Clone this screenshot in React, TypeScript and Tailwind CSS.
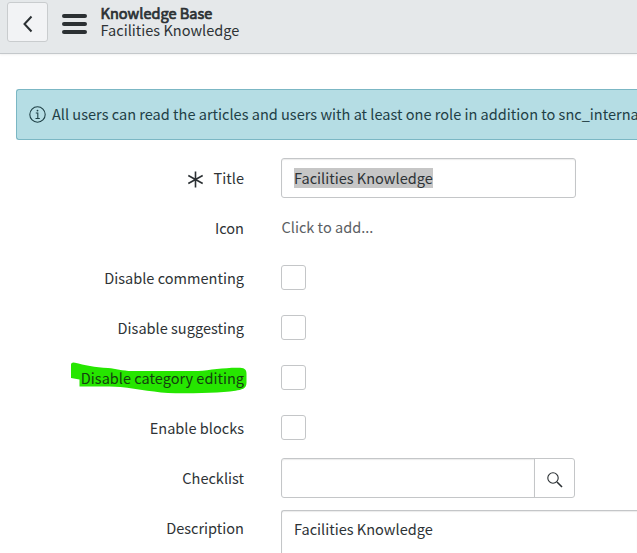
import type { ReactNode } from "react";

const checkboxes = [
  { id: "commenting", label: "Disable commenting" },
  { id: "suggesting", label: "Disable suggesting" },
  { id: "category", label: "Disable category editing", highlighted: true },
  { id: "blocks", label: "Enable blocks" },
];

function Header() {
  return (
    <header className="flex h-[54px] items-start border-b border-[#c4c8cb] bg-[#e5e8ea] shadow-[0_1px_2px_rgba(0,0,0,0.06)]">
      <button
        type="button"
        aria-label="Back"
        className="ml-[7px] mt-[2px] flex h-10 w-[41px] items-center justify-center rounded-[3px] border border-[#c9ccce] bg-[#f2f3f5]"
      >
        <svg width="12" height="18" viewBox="0 0 12 18" fill="none" stroke="#2b3033" strokeWidth="2" className="mt-[3px]">
          <path d="M9.500 1.500 2.500 9l7 7.500" />
        </svg>
      </button>
      <button type="button" aria-label="Menu" className="ml-[14px] mt-[14px] flex flex-col gap-1">
        <span className="h-1 w-[25px] rounded-full bg-[#2b3033]" />
        <span className="h-1 w-[25px] rounded-full bg-[#2b3033]" />
        <span className="h-1 w-[25px] rounded-full bg-[#2b3033]" />
      </button>
      <div className="ml-[13.6px] mt-1 leading-[17px]">
        <h1 className="[-webkit-text-stroke:0.7px_#2b3033]">Knowledge Base</h1>
        <p>Facilities Knowledge</p>
      </div>
    </header>
  );
}

function Notice() {
  return (
    <div className="ml-4 mt-[35px] flex h-[51px] items-center overflow-hidden rounded-l-[3px] border border-r-0 border-[#7bb7c4] bg-[#b5dde4] pl-3 text-[#1f4046]">
      <svg width="17" height="17" viewBox="0 0 17 17" fill="none" stroke="currentColor" className="shrink-0">
        <circle cx="8.5" cy="8.5" r="7.7" strokeWidth="1.1" />
        <path d="M6.8 7h2v5.5M6.5 12.5h4.3" strokeWidth="1.1" />
        <circle cx="8.5" cy="4.6" r="0.9" fill="currentColor" stroke="none" />
      </svg>
      <p className="mb-0.5 ml-1.5 whitespace-nowrap">
        All users can read the articles and users with at least one role in addition to snc_internal
      </p>
    </div>
  );
}

function Field({ label, htmlFor, children }: { label: ReactNode; htmlFor?: string; children: ReactNode }) {
  return (
    <div className="flex h-[50px] items-center">
      <label htmlFor={htmlFor} className="flex w-[244px] items-center justify-end whitespace-nowrap">
        {label}
      </label>
      <div className="ml-[37px] flex-1">{children}</div>
    </div>
  );
}

function Highlighted({ children }: { children: ReactNode }) {
  return (
    <span className="relative">
      <svg
        width="178"
        height="34"
        viewBox="0 0 178 34"
        fill="#26e600"
        className="absolute -left-[11px] -top-[5px]"
      >
        <path d="M1 2.500Q1 0 5 .700C14 3 25 5.500 38 6c8 .5 14 3 24 3h66c12-1 27-3.500 40-3.300 6 0 8.500 1 8.500 6v9c0 6-5 7-11 8-14 2.300-35 2.500-60 2.500-20-.2-37-4.500-55-6.200-12-.8-29-.5-41-.5v-7L1 16Z" />
      </svg>
      <span className="relative text-[#14400f]">{children}</span>
    </span>
  );
}

export default function App() {
  return (
    <div className="h-[553px] w-full overflow-hidden bg-white font-['Noto_Sans_CJK_SC',sans-serif] text-[14.55px] leading-[22px] text-[#2e3336]">
      <Header />
      <Notice />
      <form className="mt-[13px]">
        <Field
          htmlFor="title"
          label={
            <>
              <svg width="17" height="17" viewBox="0 0 16 17" stroke="#2b3033" strokeWidth="1.6" className="mr-[10px] mt-[3px]">
                <path d="M8 .5v16M.8 4.500l14.400 8M15.200 4.500l-14.400 8" />
              </svg>
              Title
            </>
          }
        >
          <div
            id="title"
            className="flex h-10 w-[295px] items-center rounded-[3px] border border-[#c4c6c8] pl-3 shadow-[inset_0_1px_1px_rgba(0,0,0,0.08)]"
          >
            <span className="h-5 bg-[#c6c6c6] leading-5">Facilities Knowledge</span>
          </div>
        </Field>
        <Field label="Icon">
          <span className="relative -top-px left-[0.5px] text-[#5c6063]">Click to add...</span>
        </Field>
        {checkboxes.map((box) => (
          <Field
            key={box.id}
            htmlFor={box.id}
            label={box.highlighted ? <Highlighted>{box.label}</Highlighted> : box.label}
          >
            <input
              id={box.id}
              type="checkbox"
              className="-mt-px block size-[25px] appearance-none rounded-[3px] border border-[#c4c6c8] bg-white"
            />
          </Field>
        ))}
        <Field label="Checklist" htmlFor="checklist">
          <div className="flex h-10 w-[294px] rounded-[3px] border border-[#c4c6c8]">
            <input
              id="checklist"
              className="min-w-0 flex-1 rounded-l-[3px] px-3 shadow-[inset_0_1px_1px_rgba(0,0,0,0.08)] outline-none"
            />
            <button
              type="button"
              aria-label="Look up checklist"
              className="flex w-10 items-center justify-center border-l border-[#c4c6c8]"
            >
              <svg width="16" height="16" viewBox="0 0 16 16" fill="none" stroke="#2b3033" className="mt-[3px]">
                <circle cx="6" cy="6" r="5.200" strokeWidth="1.100" />
                <path d="m10 10 5 5" strokeWidth="1.600" />
              </svg>
            </button>
          </div>
        </Field>
        <div className="flex items-start">
          <label htmlFor="description" className="mt-[14px] w-[244px] text-right">
            Description
          </label>
          <textarea
            id="description"
            defaultValue="Facilities Knowledge"
            className="ml-[37px] mt-[7px] h-20 flex-1 resize-none rounded-tl-[3px] border border-r-0 border-[#c4c6c8] px-3 py-[7px] shadow-[inset_0_1px_1px_rgba(0,0,0,0.08)] outline-none"
          />
        </div>
      </form>
    </div>
  );
}
